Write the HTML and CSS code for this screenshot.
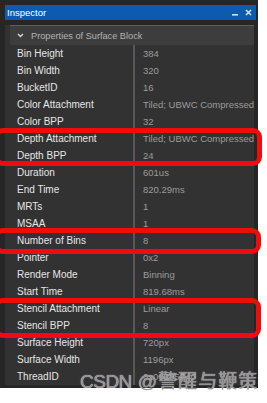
FILE: index.html
```html
<!DOCTYPE html>
<html lang="en">
<head>
  <meta charset="UTF-8">
  <title>Inspector</title>
  <link rel="stylesheet" href="styles.css">
</head>
<body>

<div class="window">
  <div class="titlebar">
    <span class="title">Inspector</span>
    <span class="controls">
      <svg width="7" height="7" viewBox="0 0 7 7"><rect x="0" y="5" width="6" height="1.6" fill="#cfe0f5"/></svg>
      <svg width="7" height="7" viewBox="0 0 7 7"><path d="M1 1 L6 6 M6 1 L1 6" stroke="#cfe0f5" stroke-width="1.6"/></svg>
    </span>
  </div>

  <div class="panel">
    <div class="section">
      <svg width="7" height="5" viewBox="0 0 7 5"><path d="M1 1 L3.5 3.5 L6 1" fill="none" stroke="#d8d8d8" stroke-width="1.4"/></svg>
      <span>Properties of Surface Block</span>
    </div>
    <div class="props">
      <div class="row"><span class="key">Bin Height</span><span class="val">384</span></div>
      <div class="row"><span class="key">Bin Width</span><span class="val">320</span></div>
      <div class="row"><span class="key">BucketID</span><span class="val">16</span></div>
      <div class="row"><span class="key">Color Attachment</span><span class="val">Tiled; UBWC Compressed</span></div>
      <div class="row"><span class="key">Color BPP</span><span class="val">32</span></div>
      <div class="row"><span class="key">Depth Attachment</span><span class="val">Tiled; UBWC Compressed</span></div>
      <div class="row"><span class="key">Depth BPP</span><span class="val">24</span></div>
      <div class="row"><span class="key">Duration</span><span class="val">601us</span></div>
      <div class="row"><span class="key">End Time</span><span class="val">820.29ms</span></div>
      <div class="row"><span class="key">MRTs</span><span class="val">1</span></div>
      <div class="row"><span class="key">MSAA</span><span class="val">1</span></div>
      <div class="row"><span class="key">Number of Bins</span><span class="val">8</span></div>
      <div class="row"><span class="key">Pointer</span><span class="val">0x2</span></div>
      <div class="row"><span class="key">Render Mode</span><span class="val">Binning</span></div>
      <div class="row"><span class="key">Start Time</span><span class="val">819.68ms</span></div>
      <div class="row"><span class="key">Stencil Attachment</span><span class="val">Linear</span></div>
      <div class="row"><span class="key">Stencil BPP</span><span class="val">8</span></div>
      <div class="row"><span class="key">Surface Height</span><span class="val">720px</span></div>
      <div class="row"><span class="key">Surface Width</span><span class="val">1196px</span></div>
      <div class="row"><span class="key">ThreadID</span><span class="val">0x00005F40</span></div>
    </div>
  </div>

  <div class="mark mark-depth"></div>
  <div class="mark mark-bins"></div>
  <div class="mark mark-stencil"></div>
</div>

<div class="watermark"><span class="wm-brand">CSDN</span><span class="wm-user">@警醒与鞭策</span></div>

</body>
</html>
```

FILE: styles.css
```css
* { box-sizing: border-box; }
body { margin: 0; padding: 0; background: #fff; font-family: "Liberation Sans", Arial, sans-serif; position: relative; width: 267px; height: 403px; overflow: hidden; }

.window { position: relative; width: 258px; height: 388px; background: #262626; padding: 5px 2px 0 5px; }

.titlebar { height: 15px; background: #0d5bb0; display: flex; align-items: center; justify-content: space-between; padding: 0 4px 0 2px; }
.title { color: #fff; font-size: 9.5px; }
.controls { display: flex; gap: 6px; align-items: center; }
.controls svg { display: block; }

.panel { margin-top: 5px; margin-right: 2px; background: #323232; }
.section { height: 20px; background: #3d3d3d; border-top: 1px solid #5c5c5c; display: flex; align-items: center; gap: 7px; padding-left: 7px; margin-left: 5px; color: #b2b2b2; font-size: 9.2px; }
.section svg { display: block; }

.props { display: flex; flex-direction: column; }
.row { display: grid; grid-template-columns: 128px 1fr; height: 17px; align-items: center; }
.key { color: #e6e6e6; font-size: 10px; padding-left: 12px; white-space: nowrap; }
.val { color: #9c9c9c; font-size: 9.5px; padding-left: 8px; white-space: nowrap; overflow: hidden; border-left: 2px solid #585858; height: 17px; line-height: 17px; }

.mark { position: absolute; left: -6px; width: 268px; border: 5px solid #ee0c0c; border-radius: 9px; }
.mark-depth { top: 128px; height: 38px; }
.mark-bins { top: 228px; height: 26px; width: 267px; }
.mark-stencil { top: 298px; height: 40px; width: 267px; }

.watermark { position: absolute; left: 80px; top: 371px; display: flex; gap: 6px; align-items: baseline; line-height: 22px; color: #939393; white-space: nowrap; font-family: "Liberation Sans", "Noto Sans CJK SC", sans-serif; text-shadow: 0 0 1px rgba(255,255,255,0.9); }
.wm-brand { font-size: 19px; letter-spacing: -0.5px; }
.wm-user { font-size: 19px; letter-spacing: 1px; }
```
